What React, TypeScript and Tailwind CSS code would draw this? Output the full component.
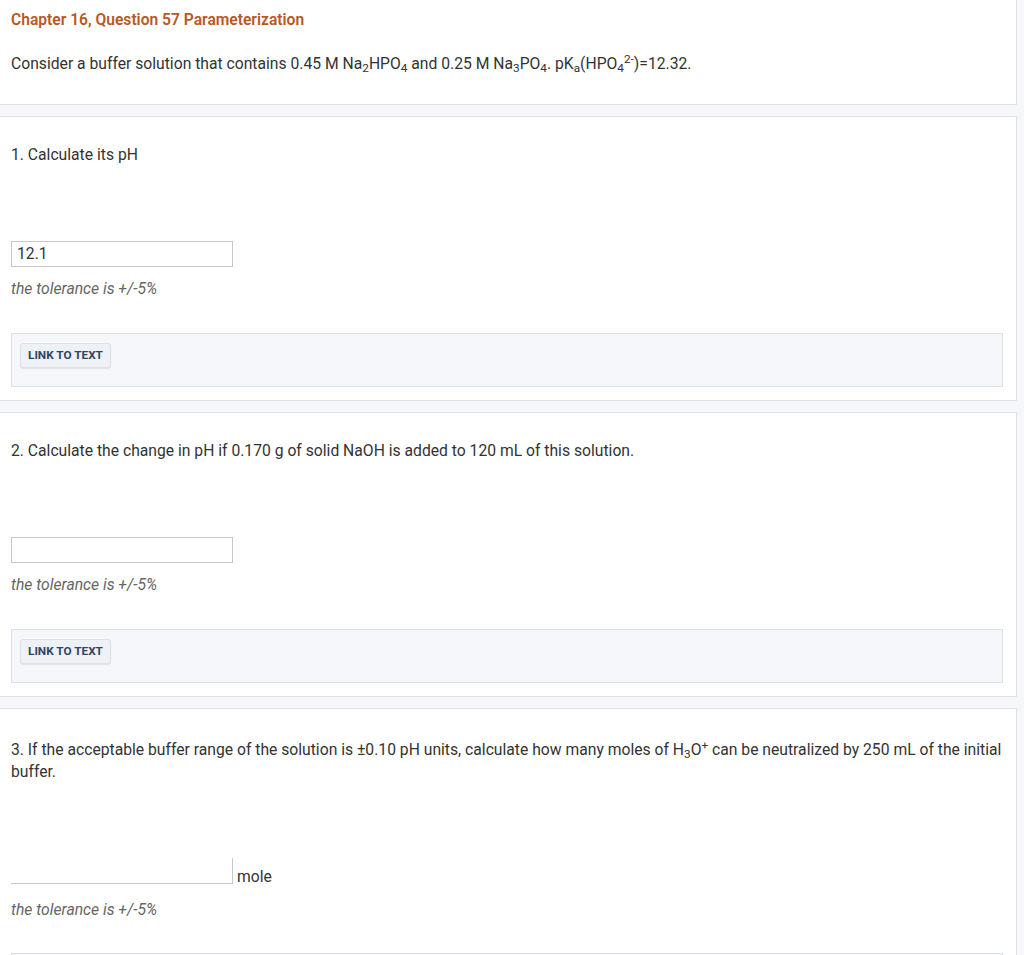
import React from 'react';

const font = { fontFamily: 'Roboto, "Liberation Sans", sans-serif' };

const LinkBox: React.FC = () => (
  <div className="mr-[13px] h-[54px] border border-[#dcdfe3] bg-[#f5f7fa] px-2 pt-2">
    <button className="h-[25px] rounded-[3px] border border-[#dde1e6] bg-[#eef1f5] px-[7px] text-[11.8px] font-bold uppercase leading-[23px] text-[#2d4568] shadow-[0_1px_1px_rgba(0,0,0,0.08)]">
      Link to text
    </button>
  </div>
);

const Tolerance: React.FC<{ className?: string }> = ({ className = '' }) => (
  <p className={`text-[15.7px] italic leading-[22px] text-[#666] ${className}`}>the tolerance is +/-5%</p>
);

const Card: React.FC<{ children: React.ReactNode; className?: string }> = ({ children, className = '' }) => (
  <section className={`-ml-px w-[1018px] border border-[#dfe3e8] bg-white pl-[11px] ${className}`}>{children}</section>
);

export default function App() {
  return (
    <div className="min-h-[955px] bg-[#f5f7fa] text-[#333]" style={font}>
      <div className="flex flex-col gap-[11px] overflow-hidden">
        {/* header card */}
        <Card className="-mt-px h-[106px] pt-[10px]">
          <h1 className="text-[15.6px] font-semibold leading-[20px] text-[#b9581f]">
            Chapter 16, Question 57 Parameterization
          </h1>
          <p className="mt-[23px] text-[15.7px] leading-[22px]">
            Consider a buffer solution that contains 0.45 M Na<sub>2</sub>HPO<sub>4</sub> and 0.25 M Na
            <sub>3</sub>PO<sub>4</sub>. pK<sub>a</sub>(HPO<sub>4</sub>
            <sup>2-</sup>)=12.32.
          </p>
        </Card>

        {/* question 1 */}
        <Card className="pt-[27px] pb-[13px]">
          <p className="text-[15.7px] leading-[22px]">1. Calculate its pH</p>
          <div className="mt-[75px] flex h-[26px] w-[222px] items-center border border-[#c8c8c8] px-[5px] text-[15.7px]">
            12.1
          </div>
          <Tolerance className="mt-[11px]" />
          <div className="mt-[33px]">
            <LinkBox />
          </div>
        </Card>

        {/* question 2 */}
        <Card className="pt-[27px] pb-[13px]">
          <p className="text-[15.7px] leading-[22px]">
            2. Calculate the change in pH if 0.170 g of solid NaOH is added to 120 mL of this solution.
          </p>
          <div className="mt-[75px] h-[26px] w-[222px] border border-[#c8c8c8]" />
          <Tolerance className="mt-[11px]" />
          <div className="mt-[33px]">
            <LinkBox />
          </div>
        </Card>

        {/* question 3 */}
        <Card className="h-[260px] pt-[30px]">
          <p className="pr-[12px] text-[15.7px] leading-[22px]">
            3. If the acceptable buffer range of the solution is ±0.10 pH units, calculate how many moles of H
            <sub>3</sub>O<sup>+</sup> can be neutralized by 250 mL of the initial buffer.
          </p>
          <div className="mt-[75px] flex items-end gap-[4px]">
            <div className="h-[26px] w-[222px] border-r border-b border-[#c8c8c8]" />
            <span className="text-[15.7px] leading-[15px]">mole</span>
          </div>
          <Tolerance className="mt-[15px]" />
          <div className="mr-[13px] mt-[32px] h-[20px] border border-[#dcdfe3] bg-[#f5f7fa]" />
        </Card>
      </div>
    </div>
  );
}
